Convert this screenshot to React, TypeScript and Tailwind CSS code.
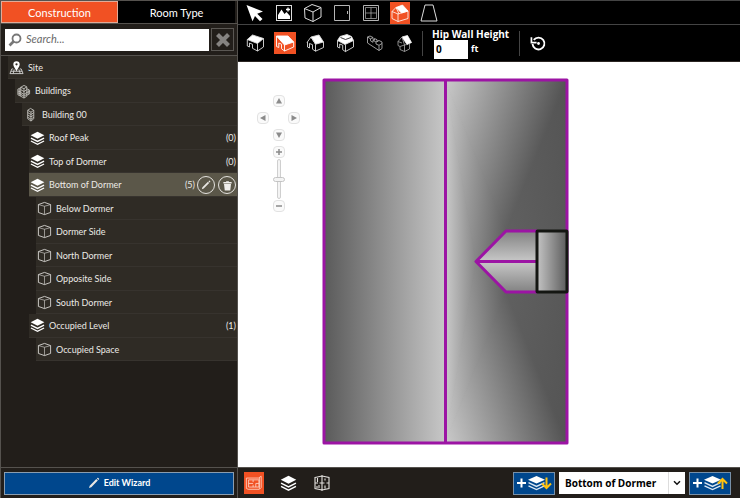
import React from 'react';
import clsx from 'clsx';

type IconProps = { className?: string };
type Vertex = [x: number, y: number, shade: number];

interface TreeItem {
  label: string;
  depth: number;
  icon: React.FC<IconProps>;
  count?: number;
  selected?: boolean;
}

const LayersIcon = ({ className }: IconProps) => (
  <svg viewBox="0 0 16 16" className={className} fill="none" stroke="#fff" strokeWidth="1.400">
    <path d="M8 .8 15.300 4.500 8 8.200 .7 4.500Z" fill="#fff" stroke="none" />
    <path d="M1 7.600 8 11.100 15 7.600M1 10.700 8 14.200 15 10.700" />
  </svg>
);

const SiteIcon = ({ className }: IconProps) => (
  <svg viewBox="0 0 16 16" className={className} fill="none" stroke="#ddd" strokeWidth="0.900">
    <path d="M4.500 9.500H3L1 14.500h14l-2-5h-1.500M2 12h12M5.500 10 4.500 14.500M10.500 10l1.500 4.500" />
    <path
      d="M8 12C6.500 9 4.600 7 4.600 4.800a3.400 3.400 0 0 1 6.800 0C11.400 7 9.500 9 8 12Z"
      fill="#fff"
      stroke="none"
    />
    <circle cx="8" cy="4.600" r="1.200" fill="#2f2b25" stroke="none" />
  </svg>
);

const BuildingsIcon = ({ className }: IconProps) => (
  <svg viewBox="0 0 16 16" className={className} fill="none" stroke="#c9c7c3" strokeWidth="0.900">
    <path d="M5 3.500 8.500 1.500 11.500 3v10L8.500 15 5 13Z" />
    <path d="M5 3.500 8.500 5v10M8.500 5l3-2M5 6l3.500 2 3-2M5 9l3.500 2 3-2M5 11l3.500 2 3-2" />
    <path d="M5 4 2 5.500v6L5 13M2 7.500l3 1M2 9.500l3 1M3.500 5v7M11.500 5l3 1.500v4L11.500 12M11.500 9l3-1M13 6v5" />
  </svg>
);

const BuildingIcon = ({ className }: IconProps) => (
  <svg viewBox="0 0 16 16" className={className} fill="none" stroke="#c9c7c3" strokeWidth="0.900">
    <path d="M5 3.500 8 1.500l3.500 2v9L8.500 15 5 12.500Z" />
    <path d="M5 3.500 8.500 5.500V15M8.500 5.500l3-2M5 6l3.500 2 3-2M5 8.500l3.500 2 3-2M5 11l3.500 2 3-2" />
  </svg>
);

const SpaceIcon = ({ className }: IconProps) => (
  <svg viewBox="0 0 16 16" className={className} fill="none" stroke="#d0cecb" strokeWidth="1">
    <path d="M1.500 3.800 8 1.500 14.500 3.800v8.400L8 14.500 1.500 12.200Z" />
    <path d="M1.500 3.800 8 5.600l6.500-1.800M8 5.600v8.900" strokeWidth="0.700" />
  </svg>
);

const PencilIcon = ({ className }: IconProps) => (
  <svg viewBox="0 0 12 12" className={className} fill="#e8e6e2">
    <path d="M1 11l.7-2.300L8.300 2l1.500 1.600-6.500 6.700ZM8.900 1.400l.7-.6c.5-.5 2 1 1.500 1.500l-.7.700Z" />
  </svg>
);

const TrashIcon = ({ className }: IconProps) => (
  <svg viewBox="0 0 12 12" className={className} fill="#f1efec">
    <path d="M1.500 2.300h3v-1h3v1h3v1.500h-9ZM2.200 4.400h7.600L9 11.400H3Z" />
  </svg>
);

const CursorIcon = ({ className }: IconProps) => (
  <svg viewBox="0 0 20 20" className={className} fill="#fff">
    <path d="M1.500 2 18 8.500 12.200 10.800 17.500 16 15 18.300 10 13 7.500 18.300Z" />
  </svg>
);

const ImageIcon = ({ className }: IconProps) => (
  <svg viewBox="0 0 20 20" className={className} fill="none">
    <rect x="2.500" y="2.500" width="15" height="15" stroke="#ddd" />
    <path d="M4 16v-4l3.500-5.500L10.500 11l2-2 3.500 4v3Z" fill="#fff" />
    <path d="M14 4.500v4M12 6.500h4" stroke="#fff" strokeWidth="1.300" />
  </svg>
);

const CubeIcon = ({ className }: IconProps) => (
  <svg viewBox="0 0 20 20" className={className} fill="none" stroke="#ddd">
    <path d="M1.500 5.500 9 1.500 18 4.500V14L10 18.500 2 15ZM1.500 5.500 10 9l8-4.500M10 9v9.500" />
  </svg>
);

const DoorIcon = ({ className }: IconProps) => (
  <svg viewBox="0 0 20 20" className={className} fill="none" stroke="#b5b5b5">
    <path d="M2.500 17.500v-15h15v15ZM15.500 8v3" />
  </svg>
);

const WindowIcon = ({ className }: IconProps) => (
  <svg viewBox="0 0 20 20" className={className} fill="none" stroke="#b5b5b5">
    <path d="M2.500 2.500h15v15h-15Z" />
    <path d="M4.500 4.500h11v11h-11ZM10 4.500v11M4.500 10h11" strokeWidth="0.700" />
  </svg>
);

const RoofIcon = ({ className }: IconProps) => (
  <svg viewBox="0 0 20 20" className={className} fill="none" stroke="#fff" strokeWidth="0.800">
    <path d="M6 4.500 12.500 2 18 8l-6.500 2Z" fill="#fff" />
    <path d="M6 4.500 2 8.500v7l6 3V11M2 8.500 8 11l10-3M8 18.500l10-3V8M6 4.500l3 6.300" />
  </svg>
);

const TrapezoidIcon = ({ className }: IconProps) => (
  <svg viewBox="0 0 20 20" className={className} fill="none" stroke="#ddd">
    <path d="M6 2h8L18 18H2Z" />
  </svg>
);

const HipRoofIcon = ({ className }: IconProps) => (
  <svg viewBox="0 0 22 22" className={className} fill="none" stroke="#ddd" strokeWidth="0.900">
    <path d="M3.300 7.500 8.500 3 19.500 6.500 13.500 11.500Z" fill="#fff" />
    <path d="M3.300 7.500v6.500l2.200 1v-4l3 1.300v4l5 2.700v-7.500M13.500 19l6-4V6.500" />
  </svg>
);

const ShedRoofIcon = ({ className }: IconProps) => (
  <svg viewBox="0 0 22 22" className={className} fill="none" stroke="#fff" strokeWidth="0.900">
    <path d="M2.500 4 14 4l5.700 6-9.200 3Z" fill="#fff" />
    <path d="M2.500 4v10.500l2.300 1v-4.500l2.700 1.200v4.500l3 2.300v-6M10.500 19l9.200-4v-5" />
  </svg>
);

const GableRoofIcon = ({ className }: IconProps) => (
  <svg viewBox="0 0 22 22" className={className} fill="none" stroke="#ddd" strokeWidth="0.900">
    <path d="M7 5 15 3l4.500 7-8 2.200Z" fill="#fff" />
    <path d="M7 5 3 10.500M7 5l4.500 7M3.500 10v5l2 1v-4.500l3 1.200v4.500l3 2v-7M11.500 19.200l8-3.700V10" />
  </svg>
);

const MansardRoofIcon = ({ className }: IconProps) => (
  <svg viewBox="0 0 22 22" className={className} fill="none" stroke="#ddd" strokeWidth="0.900">
    <path d="M3.500 8.500 6 4.500 13 2.500 17.500 4.500 19.500 8.500 11 12.500Z" fill="#fff" />
    <path d="M6.500 5.500l5 2 5.500-2" stroke="#222" strokeWidth="0.900" />
    <path d="M3.500 8.500v6.500l2.200 1v-4l3 1.200v4.500l2.800 2v-7M11.500 19.500l8-4.500V8.500" />
  </svg>
);

const ParapetIcon = ({ className }: IconProps) => (
  <svg viewBox="0 0 22 22" className={className} fill="none" stroke="#aaa" strokeWidth="0.900">
    <path d="M3.500 5 6 4l3 1.500v2l1.500.7V6.500l2.500 1.200v2L15 8.500l3 1.500v6.500L15 18.500 3.500 11ZM3.500 5 6.500 6.800v2l2.500 1.500v-2l3 1.700v2l3 1.300v5.200M6.500 6.800 9 5.500M12 10l2.500-1.500M15 13.300l3-1.800" />
  </svg>
);

const DormerIcon = ({ className }: IconProps) => (
  <svg viewBox="0 0 22 22" className={className} fill="none" stroke="#aaa" strokeWidth="0.800">
    <path d="M8 5 13.500 3.500 17.500 10.500 13 12.500Z" fill="#fff" stroke="#fff" />
    <path d="M8 5 4 9.500v4l2 1v3l4.500 2 5-2.500v-5M8 5l2.500 8v6.500M4 9.500l4 1.500M6 14.500l4.500-1.500 2.500-.5" />
  </svg>
);

const ResetIcon = ({ className }: IconProps) => (
  <svg viewBox="0 0 18 18" className={className} fill="none" stroke="#fff" strokeWidth="2">
    <path d="M4 5.200A6.300 6.300 0 1 1 2.700 9.500" />
    <path d="M1.500 2.500V8H7" strokeWidth="1.800" />
    <circle cx="9" cy="9" r="1.500" fill="#fff" stroke="none" />
  </svg>
);

const PlanIcon = ({ className }: IconProps) => (
  <svg viewBox="0 0 20 20" className={className} fill="none" stroke="#ffd9cb" strokeWidth="0.900">
    <path d="M1.500 4.500h13.500l3-2v12.500l-2 2H3.500l-2-1ZM4 6.500h11.500v8H4ZM4 10.500h5M9 6.500v2.500M9 12v2.500M12 10.500h3.500M12 10.500v4M16 4v12.500" />
  </svg>
);

const SectionIcon = ({ className }: IconProps) => (
  <svg viewBox="0 0 18 18" className={className} fill="none" stroke="#e4e2df" strokeWidth="1.100">
    <path d="M2 3.500 9 2l7 1.500v11L9 16l-7-1.500ZM9 1v16M4.500 4v4M2 9h3M6.500 9h5M13.500 9H16M6 11v3M12 4.500v2M12 11.500v3M4 12v2" />
  </svg>
);

const AddLayerIcon = ({ up }: { up?: boolean }) => (
  <svg viewBox="0 0 38 18" className="h-[18px] w-[38px]" fill="none">
    <path d="M2 9h9M6.500 4.500v9" stroke="#fff" strokeWidth="2" />
    <path d="M21.500 2 30 5.800 21.500 9.600 13 5.800Z" fill="#fff" />
    <path d="M13.500 8.700l8 3.700 8-3.700M13.500 11.900l8 3.700 8-3.700" stroke="#dce8f4" strokeWidth="1.400" />
    {up ? (
      <path d="M31.500 15V5M27 9.500 31.500 5 36 9.500" stroke="#ffc20e" strokeWidth="2" />
    ) : (
      <path d="M31.500 3.500v10M27 9.500 31.500 14 36 9.500" stroke="#ffc20e" strokeWidth="2" />
    )}
  </svg>
);

const treeItems: TreeItem[] = [
  { label: 'Site', depth: 0, icon: SiteIcon },
  { label: 'Buildings', depth: 1, icon: BuildingsIcon },
  { label: 'Building 00', depth: 2, icon: BuildingIcon },
  { label: 'Roof Peak', depth: 3, icon: LayersIcon, count: 0 },
  { label: 'Top of Dormer', depth: 3, icon: LayersIcon, count: 0 },
  { label: 'Bottom of Dormer', depth: 3, icon: LayersIcon, count: 5, selected: true },
  { label: 'Below Dormer', depth: 4, icon: SpaceIcon },
  { label: 'Dormer Side', depth: 4, icon: SpaceIcon },
  { label: 'North Dormer', depth: 4, icon: SpaceIcon },
  { label: 'Opposite Side', depth: 4, icon: SpaceIcon },
  { label: 'South Dormer', depth: 4, icon: SpaceIcon },
  { label: 'Occupied Level', depth: 3, icon: LayersIcon, count: 1 },
  { label: 'Occupied Space', depth: 4, icon: SpaceIcon },
];

const indents = ['ml-[7px]', 'ml-[14px]', 'ml-[21px]', 'ml-[28px]', 'ml-[35px]'];

const drawTools = [
  { label: 'Select', icon: CursorIcon },
  { label: 'Image', icon: ImageIcon },
  { label: 'Space', icon: CubeIcon },
  { label: 'Door', icon: DoorIcon },
  { label: 'Window', icon: WindowIcon },
  { label: 'Roof', icon: RoofIcon, active: true },
  { label: 'Skylight', icon: TrapezoidIcon },
];

const roofTools = [
  { label: 'Hip', icon: HipRoofIcon },
  { label: 'Shed', icon: ShedRoofIcon, active: true },
  { label: 'Gable', icon: GableRoofIcon },
  { label: 'Mansard', icon: MansardRoofIcon },
  { label: 'Parapet', icon: ParapetIcon },
  { label: 'Dormer', icon: DormerIcon },
];

const grey = (v: number) => `rgb(${v}, ${v}, ${v})`;

// Fills a triangle with the linear gradient that passes through its three vertex shades.
const ShadedTriangle = ({ id, points }: { id: string; points: [Vertex, Vertex, Vertex] }) => {
  const [[x0, y0, s0], [x1, y1, s1], [x2, y2, s2]] = points;
  const det = (x1 - x0) * (y2 - y0) - (x2 - x0) * (y1 - y0);
  const gx = ((s1 - s0) * (y2 - y0) - (s2 - s0) * (y1 - y0)) / det;
  const gy = ((x1 - x0) * (s2 - s0) - (x2 - x0) * (s1 - s0)) / det;
  const len = gx * gx + gy * gy;
  const lo = Math.min(s0, s1, s2);
  const hi = Math.max(s0, s1, s2);
  const at = (s: number) => [x0 + ((s - s0) * gx) / len, y0 + ((s - s0) * gy) / len];
  const [ax, ay] = at(lo);
  const [bx, by] = at(hi);
  return (
    <>
      <linearGradient id={id} gradientUnits="userSpaceOnUse" x1={ax} y1={ay} x2={bx} y2={by}>
        <stop offset="0" stopColor={grey(lo)} />
        <stop offset="1" stopColor={grey(hi)} />
      </linearGradient>
      <polygon
        points={points.map(([x, y]) => `${x},${y}`).join(' ')}
        fill={`url(#${id})`}
        stroke={`url(#${id})`}
        strokeWidth="1"
        strokeLinejoin="round"
      />
    </>
  );
};

const ridgeTop: Vertex = [207, 18, 202];
const ridgeBottom: Vertex = [207, 381, 202];
const eaveTop: Vertex = [329, 18, 84];
const eaveBottom: Vertex = [329, 381, 84];
const peak: Vertex = [238, 200, 134];
const hipTop: Vertex = [268, 169, 96];
const hipBottom: Vertex = [268, 230, 96];
const wallTop: Vertex = [329, 169, 88];
const wallBottom: Vertex = [329, 230, 88];

const roofFaces: [Vertex, Vertex, Vertex][] = [
  [ridgeTop, ridgeBottom, peak],
  [ridgeTop, peak, hipTop],
  [ridgeTop, hipTop, eaveTop],
  [hipTop, eaveTop, wallTop],
  [ridgeBottom, peak, hipBottom],
  [ridgeBottom, hipBottom, eaveBottom],
  [hipBottom, eaveBottom, wallBottom],
];

const RoofPlan = () => (
  <svg viewBox="0 0 502 405" className="absolute inset-0 h-full w-full" role="img" aria-label="Roof plan">
    <defs>
      <linearGradient id="slope">
        <stop offset="0" stopColor={grey(90)} />
        <stop offset="1" stopColor={grey(200)} />
      </linearGradient>
      <linearGradient id="front">
        <stop offset="0" stopColor={grey(196)} />
        <stop offset="1" stopColor={grey(92)} />
      </linearGradient>
      <linearGradient id="dormer" x2="0" y2="1">
        <stop offset="0" stopColor={grey(130)} />
        <stop offset="0.5" stopColor={grey(200)} />
        <stop offset="1" stopColor={grey(130)} />
      </linearGradient>
    </defs>
    <rect x="86" y="18" width="122" height="363" fill="url(#slope)" />
    <rect x="207" y="18" width="122" height="363" fill={grey(96)} />
    {roofFaces.map((points, i) => (
      <ShadedTriangle key={i} id={`face-${i}`} points={points} />
    ))}
    <path d="M238 200 268 169H299V230H268Z" fill="url(#dormer)" />
    <g fill="none" stroke="#9c14a4" strokeWidth="3" strokeLinejoin="round">
      <path d="M86 18H329V381H86ZM207.500 18V381" />
      <path d="M299 169H268L238 199.500 268 230H299M238 199.500H299" />
    </g>
    <rect
      x="299"
      y="169"
      width="30"
      height="61"
      rx="0.500"
      fill="url(#front)"
      stroke="#141612"
      strokeWidth="3"
    />
  </svg>
);

const padButton =
  'flex h-3 w-3 items-center justify-center rounded border border-[#e2e2e2] bg-[#fafafa] text-[#8b8b8b]';

const ViewControls = () => (
  <div className="absolute left-[19px] top-[33px] flex w-[43px] flex-col items-center">
    <button aria-label="Pan up" className={padButton}>
      <svg viewBox="0 0 8 8" className="h-2 w-2" fill="currentColor"><path d="M4 1 7 6.500H1Z" /></svg>
    </button>
    <div className="my-[5px] flex w-full justify-between">
      <button aria-label="Pan left" className={padButton}>
        <svg viewBox="0 0 8 8" className="h-2 w-2" fill="currentColor"><path d="M1 4 6.500 1V7Z" /></svg>
      </button>
      <button aria-label="Pan right" className={padButton}>
        <svg viewBox="0 0 8 8" className="h-2 w-2" fill="currentColor"><path d="M7 4 1.500 1V7Z" /></svg>
      </button>
    </div>
    <button aria-label="Pan down" className={padButton}>
      <svg viewBox="0 0 8 8" className="h-2 w-2" fill="currentColor"><path d="M4 7 7 1.500H1Z" /></svg>
    </button>
    <button aria-label="Zoom in" className={clsx(padButton, 'mt-[5px]')}>
      <svg viewBox="0 0 8 8" className="h-2 w-2" stroke="currentColor" strokeWidth="1.500"><path d="M4 1v6M1 4h6" /></svg>
    </button>
    <div className="relative my-px flex h-10 w-3 justify-center">
      <div className="w-1 rounded-full border border-[#cfcfcf] bg-[#f4f4f4]" />
      <div className="absolute inset-x-0 top-[18px] h-[5px] rounded-full border border-[#c4c4c4] bg-[#f4f4f4]" />
      <input
        type="range"
        aria-label="Zoom"
        className="absolute inset-0 h-full w-full opacity-0 [writing-mode:vertical-lr]"
      />
    </div>
    <button aria-label="Zoom out" className={padButton}>
      <svg viewBox="0 0 8 8" className="h-2 w-2" stroke="currentColor" strokeWidth="1.500"><path d="M1 4h6" /></svg>
    </button>
  </div>
);

const TreeRow = ({ item }: { item: TreeItem }) => {
  const Icon = item.icon;
  return (
    <li
      className={clsx(
        'flex min-h-0 items-center border-b border-[#37332e] pl-px pt-px',
        indents[item.depth],
        item.selected ? 'bg-[#5b5749]' : 'bg-[#2f2b25]',
      )}
    >
      <Icon className="h-[15px] w-[15px] shrink-0" />
      <span className="ml-1 flex-1 whitespace-nowrap">{item.label}</span>
      {item.count !== undefined && (
        <span className={item.selected ? 'mr-[2px]' : 'mr-px'}>({item.count})</span>
      )}
      {item.selected && (
        <span className="mr-px flex gap-[3px]">
          <button aria-label="Edit" className="flex h-[18px] w-[18px] items-center justify-center rounded-full border border-[#e4e2de]">
            <PencilIcon className="h-[10px] w-[10px]" />
          </button>
          <button aria-label="Delete" className="flex h-[18px] w-[18px] items-center justify-center rounded-full border border-[#e4e2de]">
            <TrashIcon className="h-[11px] w-[11px]" />
          </button>
        </span>
      )}
    </li>
  );
};

const Sidebar = () => (
  <aside className="flex w-[238px] shrink-0 flex-col border-x border-[#55524e] bg-[#221e1a] font-['Lato','Open_Sans',sans-serif] text-[9px] text-[#eceae6]">
    <div className="grid h-6 shrink-0 grid-cols-2 border-y border-[#55524e] pr-[2px] text-[11px]">
      <button className="border border-[#e0ab98] bg-[#f15123] leading-none text-white">Construction</button>
      <button className="bg-black leading-none text-white">Room Type</button>
    </div>
    <div className="flex h-8 shrink-0 items-center gap-[2px] border-b border-[#55524e] pl-1 pr-[3px]">
      <label className="flex h-[22px] min-w-0 flex-1 items-center bg-white pl-[3px]">
        <svg viewBox="0 0 14 14" className="h-[14px] w-[14px] shrink-0" fill="none" stroke="#777">
          <circle cx="8.500" cy="5.500" r="4" strokeWidth="1.800" />
          <path d="M5.500 8.500 1.500 12.500" strokeWidth="2.600" />
        </svg>
        <input
          type="text"
          aria-label="Search"
          placeholder="Search..."
          className="ml-1 min-w-0 flex-1 text-[11px] italic text-[#555] outline-none placeholder:text-[#6a6a6a]"
        />
      </label>
      <button aria-label="Clear search" className="flex h-[23px] w-[23px] items-center justify-center border border-[#5a5753]">
        <svg viewBox="0 0 16 16" className="h-4 w-4" stroke="#858381" strokeWidth="4.200">
          <path d="M2.500 2.500l11 11M13.500 2.500l-11 11" />
        </svg>
      </button>
    </div>
    <ul className="grid h-[305px] shrink-0 auto-rows-fr">
      {treeItems.map((item) => (
        <TreeRow key={item.label} item={item} />
      ))}
    </ul>
    <div className="mt-auto flex h-[31px] shrink-0 items-center border-t border-[#55524e] px-[3px]">
      <button className="flex h-[23px] flex-1 items-center justify-center gap-1 border border-[#8a9db0] bg-[#00478d] font-bold text-white">
        <PencilIcon className="h-3 w-3" />
        Edit Wizard
      </button>
    </div>
  </aside>
);

const Toolbar = () => (
  <header className="shrink-0 bg-black">
    <div className="flex h-[25px] items-center gap-[9px] border-y border-[#444] pl-[7px]">
      {drawTools.map(({ label, icon: Icon, active }) => (
        <button
          key={label}
          aria-label={label}
          className={clsx('flex h-[22px] w-5 items-center justify-center', active && 'bg-[#f15123]')}
        >
          <Icon className="h-5 w-5" />
        </button>
      ))}
    </div>
    <div className="flex h-[37px] items-center border-b border-[#2b2622] pl-[6px]">
      <div className="flex gap-2">
        {roofTools.map(({ label, icon: Icon, active }) => (
          <button
            key={label}
            aria-label={label}
            className={clsx('flex h-[22px] w-[22px] items-center justify-center', active && 'bg-[#f15123]')}
          >
            <Icon className="h-[22px] w-[22px]" />
          </button>
        ))}
      </div>
      <div className="ml-[6px] h-[25px] w-px bg-[#444]" />
      <label className="ml-[9px] flex flex-col text-[10px] font-bold leading-[12px] text-white">
        Hip Wall Height
        <span className="flex items-center gap-[3px] pl-[2px] text-[9px]">
          <input
            type="text"
            defaultValue="0"
            className="h-[19px] w-[34px] bg-white px-[2px] text-[10px] font-bold text-black outline-none"
          />
          ft
        </span>
      </label>
      <div className="ml-[10px] h-[25px] w-px bg-[#444]" />
      <button aria-label="Reset" className="ml-[10px]">
        <ResetIcon className="h-[17px] w-[17px]" />
      </button>
    </div>
  </header>
);

const Footer = () => (
  <footer className="flex h-[31px] shrink-0 items-center border-t border-[#55524e] bg-[#221e1a] pl-[6px] pr-[9px]">
    <div className="flex items-center gap-[14px]">
      <button aria-label="Plan view" className="flex h-[22px] w-5 items-center justify-center bg-[#f15123]">
        <PlanIcon className="h-[18px] w-[18px]" />
      </button>
      <button aria-label="Levels view" className="flex h-[22px] w-5 items-center justify-center">
        <LayersIcon className="h-[17px] w-[17px]" />
      </button>
      <button aria-label="Section view" className="flex h-[22px] w-5 items-center justify-center">
        <SectionIcon className="h-[18px] w-[18px]" />
      </button>
    </div>
    <div className="ml-auto flex items-center gap-1">
      <button aria-label="Add level below" className="flex h-[23px] w-[42px] items-center justify-center border border-[#7890a8] bg-[#00478d]">
        <AddLayerIcon />
      </button>
      <div className="relative flex">
        <select
          aria-label="Level"
          className="h-[22px] w-[126px] appearance-none bg-white pl-[6px] pr-5 text-[10px] font-bold text-black"
        >
          <option>Bottom of Dormer</option>
        </select>
        <span className="pointer-events-none absolute inset-y-0 right-0 flex w-[17px] items-center justify-center border-l border-[#ddd]">
          <svg viewBox="0 0 8 6" className="h-[6px] w-2" fill="none" stroke="#111" strokeWidth="1.500">
            <path d="M1 1.200 4 4.200 7 1.200" />
          </svg>
        </span>
      </div>
      <button aria-label="Add level above" className="flex h-[23px] w-[42px] items-center justify-center border border-[#7890a8] bg-[#00478d]">
        <AddLayerIcon up />
      </button>
    </div>
  </footer>
);

const App: React.FC = () => {
  return (
    <div className="flex h-screen bg-[#221e1a] font-['Open_Sans','Noto_Sans',sans-serif]">
      <Sidebar />
      <div className="flex min-w-0 flex-1 flex-col">
        <Toolbar />
        <main className="relative min-h-0 flex-1 bg-white">
          <RoofPlan />
          <ViewControls />
        </main>
        <Footer />
      </div>
    </div>
  );
};

export default App;
